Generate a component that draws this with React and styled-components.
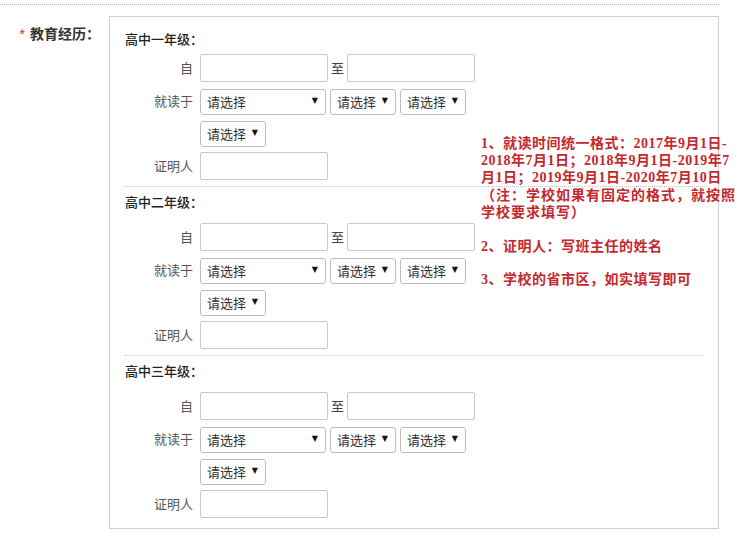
import styled, { createGlobalStyle } from "styled-components";

const GlobalStyle = createGlobalStyle`
  html, body {
    margin: 0;
    padding: 0;
    background: #fff;
  }
  body {
    font-family: "Noto Sans CJK SC", "Liberation Sans", sans-serif;
    color: #333;
  }
`;

const grades = ["高中一年级：", "高中二年级：", "高中三年级："];

const App = () => {
  return (
    <Page>
      <GlobalStyle />
      <TopRule />
      <FormRow>
        <RowLabel>
          <Star>*</Star>教育经历：
        </RowLabel>
        <Panel>
          {grades.map((title, i) => (
            <Section key={title} $last={i === grades.length - 1}>
              <SectionTitle $first={i === 0}>{title}</SectionTitle>
              <Field>
                <FieldLabel>自</FieldLabel>
                <TextInput />
                <Between>至</Between>
                <TextInput />
              </Field>
              <Field $align="flex-start">
                <FieldLabel>就读于</FieldLabel>
                <SelectGroup>
                  <SelectBox $w={126}>
                    <Select>
                      <option>请选择</option>
                    </Select>
                  </SelectBox>
                  <SelectBox $w={66}>
                    <Select>
                      <option>请选择</option>
                    </Select>
                  </SelectBox>
                  <SelectBox $w={66}>
                    <Select>
                      <option>请选择</option>
                    </Select>
                  </SelectBox>
                  <SelectBox $w={66}>
                    <Select>
                      <option>请选择</option>
                    </Select>
                  </SelectBox>
                </SelectGroup>
              </Field>
              <Field>
                <FieldLabel>证明人</FieldLabel>
                <TextInput />
              </Field>
            </Section>
          ))}

          <Note>
            <NoteBlock>
              1、就读时间统一格式：2017年9月1日-
              <br />
              2018年7月1日；2018年9月1日-2019年7
              <br />
              月1日；2019年9月1日-2020年7月10日
            </NoteBlock>
            <NoteBlock $gap={1} $spaced>
              （注：学校如果有固定的格式，就按照
              <br />
              学校要求填写）
            </NoteBlock>
            <NoteBlock $gap={17}>2、证明人：写班主任的姓名</NoteBlock>
            <NoteBlock $gap={16}>3、学校的省市区，如实填写即可</NoteBlock>
          </Note>
        </Panel>
      </FormRow>
    </Page>
  );
};

const Page = styled.div`
  width: 738px;
  min-height: 547px;
  padding-top: 4px;
  box-sizing: border-box;
`;

const TopRule = styled.div`
  width: 719px;
  border-top: 1px dotted #b8b8b8;
`;

const FormRow = styled.div`
  display: flex;
  align-items: flex-start;
  padding-top: 11px;
`;

const RowLabel = styled.div`
  width: 100px;
  margin-right: 9px;
  margin-top: 7px;
  text-align: right;
  font-size: 14px;
  line-height: 20px;
  font-weight: 700;
  color: #333;
`;

const Star = styled.span`
  color: #d3302c;
  font-weight: 400;
  margin-right: 5px;
  font-family: "Liberation Sans", sans-serif;
`;

const Panel = styled.div`
  position: relative;
  width: 610px;
  box-sizing: border-box;
  border: 1px solid #cfcfcf;
  padding: 0 15px 4px;
`;

const Section = styled.div`
  padding: 5px 0 6px;
  border-bottom: ${({ $last }) => ($last ? "none" : "1px dotted #c4c4c4")};
`;

const SectionTitle = styled.div`
  font-size: 13px;
  line-height: 20px;
  font-weight: 500;
  color: #222;
  margin-top: ${({ $first }) => ($first ? "7px" : "0")};
  margin-bottom: ${({ $first }) => ($first ? "5px" : "11px")};
`;

const Field = styled.div`
  display: flex;
  align-items: ${({ $align }) => $align || "center"};
  & + & {
    margin-top: 6px;
  }
`;

const FieldLabel = styled.label`
  width: 68px;
  margin-right: 7px;
  text-align: right;
  font-size: 13px;
  line-height: 26px;
  color: #555;
  flex-shrink: 0;
`;

const TextInput = styled.input`
  width: 128px;
  height: 28px;
  box-sizing: border-box;
  border: 1px solid #c9c9c9;
  border-radius: 2px;
  padding: 0 6px;
  font-size: 13px;
  outline: none;
`;

const Between = styled.span`
  margin: 0 3px;
  font-size: 13px;
  color: #444;
  line-height: 28px;
`;

const SelectGroup = styled.div`
  display: flex;
  flex-wrap: wrap;
  column-gap: 4px;
  row-gap: 6px;
  width: 270px;
`;

const SelectBox = styled.div`
  position: relative;
  width: ${({ $w }) => $w}px;
  height: 26px;

  &::after {
    content: "▼";
    position: absolute;
    right: 8px;
    top: 8px;
    font-size: 8px;
    line-height: 10px;
    color: #111;
    pointer-events: none;
    font-family: "DejaVu Sans", sans-serif;
  }
`;

const Select = styled.select`
  appearance: none;
  width: 100%;
  height: 100%;
  box-sizing: border-box;
  border: 1px solid #bdbdbd;
  border-radius: 3px;
  background: #fff;
  padding: 0 6px;
  font-family: "Noto Sans CJK SC", sans-serif;
  font-size: 13px;
  color: #333;
  outline: none;
`;

const Note = styled.div`
  position: absolute;
  left: 371px;
  top: 118px;
  white-space: nowrap;
  font-family: "Liberation Serif", "Noto Sans CJK SC", serif;
  font-size: 14px;
  line-height: 17px;
  font-weight: 700;
  letter-spacing: 0.5px;
  color: #c4282e;
`;

const NoteBlock = styled.div`
  margin-top: ${({ $gap }) => ($gap ? `${$gap}px` : "0")};
  letter-spacing: ${({ $spaced }) => ($spaced ? "1px" : "inherit")};
`;

export default App;
